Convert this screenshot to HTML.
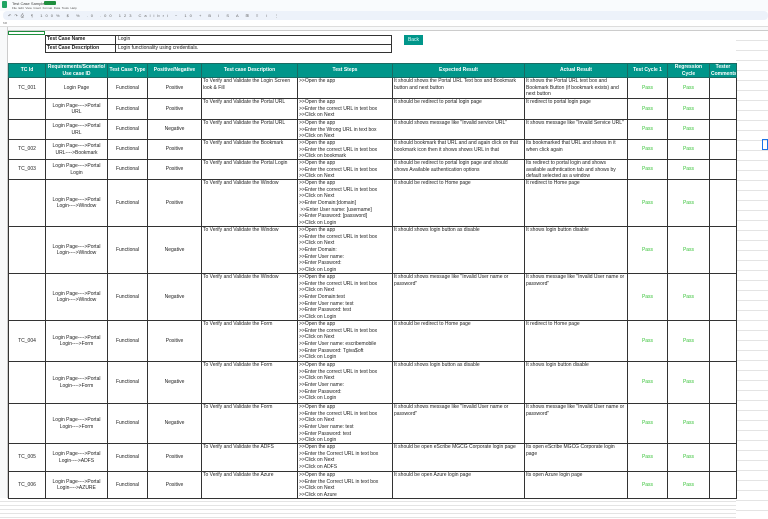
<!DOCTYPE html>
<html><head><meta charset="utf-8"><style>
*{margin:0;padding:0;box-sizing:border-box}
body{width:768px;height:519px;overflow:hidden;background:#fff;font-family:"Liberation Sans",sans-serif;font-size:5px;color:#222;position:relative}
.abs{position:absolute}
table{position:absolute;left:8px;top:63px;border-collapse:collapse;table-layout:fixed;width:728px}
td{border:1px solid #333;padding:0 1px;overflow:hidden;vertical-align:middle;text-align:center;line-height:6.6px;font-size:5px}
td.t{text-align:left;vertical-align:top}
td.p{color:#3cc43c}
tr.h td{background:#00968a;color:#fff;font-weight:bold;border-color:#1a6b63}
td div{overflow:hidden}
.grid{position:absolute;left:736px;top:31px;width:32px;height:488px;background:repeating-linear-gradient(#fff 0 9px,#e4e4e4 9px 10px)}
</style></head><body>
<div class="abs" style="left:0;top:0;width:768px;height:11px;background:#f9fbfd"></div>
<div class="abs" style="left:2px;top:1px;width:5px;height:7px;background:#1fa463;border-radius:1px"></div>
<div class="abs" style="left:12px;top:1px;font-size:4px;color:#444">Test Case Sample1</div>
<div class="abs" style="left:44px;top:1px;width:12px;height:4px;background:#1e8e3e;border-radius:1px"></div>
<div class="abs" style="left:12px;top:6px;font-size:3px;color:#555">File &nbsp;Edit &nbsp;View &nbsp;Insert &nbsp;Format &nbsp;Data &nbsp;Tools &nbsp;Help</div>
<div class="abs" style="left:3px;top:11px;width:765px;height:9px;background:#edf2fa;border-radius:4px"></div>
<div class="abs" style="left:8px;top:13px;font-size:4px;color:#666;letter-spacing:3px">↶↷⎙ ¶ 100% $ % .0 .00 123 Calibri − 10 + B I S A ⊞ ≡ ↕ ⋮</div>
<div class="abs" style="left:0;top:20px;width:768px;height:7px;background:#fff;border-bottom:1px solid #ddd"></div>
<div class="abs" style="left:3px;top:21px;font-size:3px;color:#777">M6</div>
<div class="abs" style="left:0;top:27px;width:768px;height:4px;background:#f8f9fa;border-bottom:1px solid #ccc"></div>
<div class="abs" style="left:0;top:27px;width:8px;height:492px;background:#f8f9fa;border-right:1px solid #ccc"></div>
<div class="grid"></div>
<div class="abs" style="left:762px;top:139px;width:6px;height:11px;border:1px solid #1a73e8"></div>
<div class="abs" style="left:8px;top:31px;width:37px;height:4px;border:1px solid #1e8e3e"></div>
<div class="abs" style="left:0;top:498px;width:736px;height:21px;background:repeating-linear-gradient(#fff 0 3px,#e4e4e4 3px 4px)"></div>

<div class="abs" style="left:45px;top:35px;width:347px;height:18px;border:1px solid #333"></div>
<div class="abs" style="left:45px;top:44px;width:347px;height:1px;background:#333"></div>
<div class="abs" style="left:115px;top:35px;width:1px;height:18px;background:#333"></div>
<div class="abs" style="left:47px;top:36px;font-weight:bold">Test Case Name</div>
<div class="abs" style="left:47px;top:45px;font-weight:bold">Test Case Description</div>
<div class="abs" style="left:118px;top:36px">Login</div>
<div class="abs" style="left:118px;top:45px">Login functionality using credentials.</div>
<div class="abs" style="left:404px;top:35px;width:19px;height:10px;background:#00968a;color:#dff;text-align:center;line-height:10px">Back</div>

<table>
<colgroup><col style="width:37px"><col style="width:62px"><col style="width:40px"><col style="width:54px"><col style="width:96px"><col style="width:95px"><col style="width:132px"><col style="width:103px"><col style="width:40px"><col style="width:42px"><col style="width:27px"></colgroup>
<tr class="h" style="height:14px"><td>TC Id</td><td>Requirements/Scenario/ Use case ID</td><td>Test Case Type</td><td>Positive/Negative</td><td>Test case Description</td><td>Test Steps</td><td>Expected Result</td><td>Actual Result</td><td>Test Cycle 1</td><td>Regression Cycle</td><td>Tester Comments</td></tr>
<tr style="height:21px"><td>TC_001</td><td>Login Page</td><td>Functional</td><td>Positive</td><td class="t"><div style="height:20px">To Verify and Validate the Login Screen look &amp; Fill</div></td><td class="t"><div style="height:20px">&gt;&gt;Open the app</div></td><td class="t"><div style="height:20px">It should shows the Portal URL Text box and Bookmark button and next button</div></td><td class="t"><div style="height:20px">It shows the Portal URL text box and Bookmark Button (if bookmark exists) and next button</div></td><td class="p">Pass</td><td class="p">Pass</td><td></td></tr>
<tr style="height:21px"><td></td><td>Login Page----&gt;Portal URL</td><td>Functional</td><td>Positive</td><td class="t"><div style="height:20px">To Verify and Validate the Portal URL</div></td><td class="t"><div style="height:20px">&gt;&gt;Open the app<br>&gt;&gt;Enter the correct URL in text box<br>&gt;&gt;Click on Next</div></td><td class="t"><div style="height:20px">It should be redirect to portal login page</div></td><td class="t"><div style="height:20px">It redirect to portal login page</div></td><td class="p">Pass</td><td class="p">Pass</td><td></td></tr>
<tr style="height:20px"><td></td><td>Login Page----&gt;Portal URL</td><td>Functional</td><td>Negative</td><td class="t"><div style="height:19px">To Verify and Validate the Portal URL</div></td><td class="t"><div style="height:19px">&gt;&gt;Open the app<br>&gt;&gt;Enter the Wrong URL in text box<br>&gt;&gt;Click on Next</div></td><td class="t"><div style="height:19px">It should shows message like "Invalid service URL"</div></td><td class="t"><div style="height:19px">It shows message like "Invalid Service URL"</div></td><td class="p">Pass</td><td class="p">Pass</td><td></td></tr>
<tr style="height:20px"><td>TC_002</td><td>Login Page----&gt;Portal URL----&gt;Bookmark</td><td>Functional</td><td>Positive</td><td class="t"><div style="height:19px">To Verify and Validate the Bookmark</div></td><td class="t"><div style="height:19px">&gt;&gt;Open the app<br>&gt;&gt;Enter the correct URL in text box<br>&gt;&gt;Click on bookmark</div></td><td class="t"><div style="height:19px">It should bookmark that URL and and again click on that bookmark icon then it shows shows URL in that</div></td><td class="t"><div style="height:19px">Its bookmarked that URL and shows in it when click again</div></td><td class="p">Pass</td><td class="p">Pass</td><td></td></tr>
<tr style="height:20px"><td>TC_003</td><td>Login Page----&gt;Portal Login</td><td>Functional</td><td>Positive</td><td class="t"><div style="height:19px">To Verify and Validate the Portal Login</div></td><td class="t"><div style="height:19px">&gt;&gt;Open the app<br>&gt;&gt;Enter the correct URL in text box<br>&gt;&gt;Click on Next</div></td><td class="t"><div style="height:19px">It should be redirect to portal login page and should shows Available authentication options</div></td><td class="t"><div style="height:19px">Its redirect to portal login and shows available authntication tab and shows by default selected as a window</div></td><td class="p">Pass</td><td class="p">Pass</td><td></td></tr>
<tr style="height:47px"><td></td><td>Login Page----&gt;Portal Login----&gt;Window</td><td>Functional</td><td>Positive</td><td class="t"><div style="height:46px">To Verify and Validate the Window</div></td><td class="t"><div style="height:46px">&gt;&gt;Open the app<br>&gt;&gt;Enter the correct URL in text box<br>&gt;&gt;Click on Next<br>&gt;&gt;Enter Domain:[domain]<br>&nbsp;&gt;&gt;Enter User name: [username]<br>&gt;&gt;Enter Password: [password]<br>&gt;&gt;Click on Login</div></td><td class="t"><div style="height:46px">It should be redirect to Home page</div></td><td class="t"><div style="height:46px">It redirect to Home page</div></td><td class="p">Pass</td><td class="p">Pass</td><td></td></tr>
<tr style="height:47px"><td></td><td>Login Page----&gt;Portal Login----&gt;Window</td><td>Functional</td><td>Negative</td><td class="t"><div style="height:46px">To Verify and Validate the Window</div></td><td class="t"><div style="height:46px">&gt;&gt;Open the app<br>&gt;&gt;Enter the correct URL in text box<br>&gt;&gt;Click on Next<br>&gt;&gt;Enter Domain:<br>&gt;&gt;Enter User name:<br>&gt;&gt;Enter Password:<br>&gt;&gt;Click on Login</div></td><td class="t"><div style="height:46px">It should shows login button as disable</div></td><td class="t"><div style="height:46px">It shows login button disable</div></td><td class="p">Pass</td><td class="p">Pass</td><td></td></tr>
<tr style="height:47px"><td></td><td>Login Page----&gt;Portal Login----&gt;Window</td><td>Functional</td><td>Negative</td><td class="t"><div style="height:46px">To Verify and Validate the Window</div></td><td class="t"><div style="height:46px">&gt;&gt;Open the app<br>&gt;&gt;Enter the correct URL in text box<br>&gt;&gt;Click on Next<br>&gt;&gt;Enter Domain:test<br>&gt;&gt;Enter User name: test<br>&gt;&gt;Enter Password: test<br>&gt;&gt;Click on Login</div></td><td class="t"><div style="height:46px">It should shows message like "Invalid User name or password"</div></td><td class="t"><div style="height:46px">It shows message like "Invalid User name or password"</div></td><td class="p">Pass</td><td class="p">Pass</td><td></td></tr>
<tr style="height:41px"><td>TC_004</td><td>Login Page----&gt;Portal Login----&gt;Form</td><td>Functional</td><td>Positive</td><td class="t"><div style="height:40px">To Verify and Validate the Form</div></td><td class="t"><div style="height:40px">&gt;&gt;Open the app<br>&gt;&gt;Enter the correct URL in text box<br>&gt;&gt;Click on Next<br>&gt;&gt;Enter User name: escribemobile<br>&gt;&gt;Enter Password: Tgiva$oft<br>&gt;&gt;Click on Login</div></td><td class="t"><div style="height:40px">It should be redirect to Home page</div></td><td class="t"><div style="height:40px">It redirect to Home page</div></td><td class="p">Pass</td><td class="p">Pass</td><td></td></tr>
<tr style="height:42px"><td></td><td>Login Page----&gt;Portal Login----&gt;Form</td><td>Functional</td><td>Negative</td><td class="t"><div style="height:41px">To Verify and Validate the Form</div></td><td class="t"><div style="height:41px">&gt;&gt;Open the app<br>&gt;&gt;Enter the correct URL in text box<br>&gt;&gt;Click on Next<br>&gt;&gt;Enter User name:<br>&gt;&gt;Enter Password:<br>&gt;&gt;Click on Login</div></td><td class="t"><div style="height:41px">It should shows login button as disable</div></td><td class="t"><div style="height:41px">It shows login button disable</div></td><td class="p">Pass</td><td class="p">Pass</td><td></td></tr>
<tr style="height:40px"><td></td><td>Login Page----&gt;Portal Login----&gt;Form</td><td>Functional</td><td>Negative</td><td class="t"><div style="height:39px">To Verify and Validate the Form</div></td><td class="t"><div style="height:39px">&gt;&gt;Open the app<br>&gt;&gt;Enter the correct URL in text box<br>&gt;&gt;Click on Next<br>&gt;&gt;Enter User name: test<br>&gt;&gt;Enter Password: test<br>&gt;&gt;Click on Login</div></td><td class="t"><div style="height:39px">It should shows message like "Invalid User name or password"</div></td><td class="t"><div style="height:39px">It shows message like "Invalid User name or password"</div></td><td class="p">Pass</td><td class="p">Pass</td><td></td></tr>
<tr style="height:28px"><td>TC_005</td><td>Login Page----&gt;Portal Login----&gt;ADFS</td><td>Functional</td><td>Positive</td><td class="t"><div style="height:27px">To Verify and Validate the ADFS</div></td><td class="t"><div style="height:27px">&gt;&gt;Open the app<br>&gt;&gt;Enter the Correct URL in text box<br>&gt;&gt;Click on Next<br>&gt;&gt;Click on ADFS</div></td><td class="t"><div style="height:27px">It should be open eScribe MGCG Corporate login page</div></td><td class="t"><div style="height:27px">Its open eScribe MGCG Corporate login page</div></td><td class="p">Pass</td><td class="p">Pass</td><td></td></tr>
<tr style="height:27px"><td>TC_006</td><td>Login Page----&gt;Portal Login----&gt;AZURE</td><td>Functional</td><td>Positive</td><td class="t"><div style="height:26px">To Verify and Validate the Azure</div></td><td class="t"><div style="height:26px">&gt;&gt;Open the app<br>&gt;&gt;Enter the Correct URL in text box<br>&gt;&gt;Click on Next<br>&gt;&gt;Click on Azure</div></td><td class="t"><div style="height:26px">It should be open Azure login page</div></td><td class="t"><div style="height:26px">Its open Azure login page</div></td><td class="p">Pass</td><td class="p">Pass</td><td></td></tr>
</table>
</body></html>
